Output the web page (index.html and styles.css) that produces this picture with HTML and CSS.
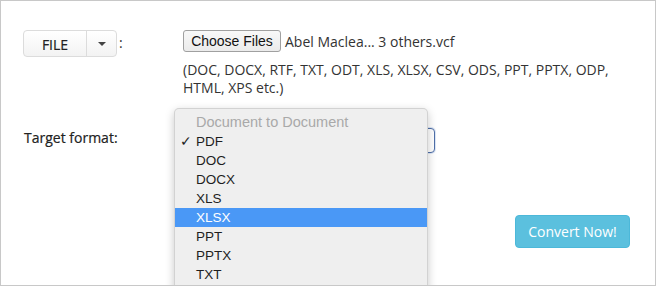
FILE: index.html
```
<!DOCTYPE html>
<html>
<head>
<meta charset="utf-8">
<link rel="stylesheet" href="styles.css">
</head>
<body>
<div class="frame">
  <div class="row row-file">
    <div class="label-col">
      <div class="btn-group">
        <span class="btn-file">FILE</span>
        <span class="btn-caret"><span class="caret"></span></span>
      </div>
      <span class="colon">:</span>
    </div>
    <div class="content-col">
      <div class="file-line">
        <span class="choose-btn">Choose Files</span>
        <span class="file-name">Abel Maclea... 3 others.vcf</span>
      </div>
      <div class="formats">(DOC, DOCX, RTF, TXT, ODT, XLS, XLSX, CSV, ODS, PPT, PPTX, ODP, HTML, XPS etc.)</div>
    </div>
  </div>
  <div class="row row-target">
    <div class="label-col target-label">Target format:</div>
    <div class="select-wrap">
      <div class="select-box"></div>
      <div class="menu">
        <div class="menu-item header">Document to Document</div>
        <div class="menu-item checked"><span class="check">✓</span>PDF</div>
        <div class="menu-item">DOC</div>
        <div class="menu-item">DOCX</div>
        <div class="menu-item">XLS</div>
        <div class="menu-item active">XLSX</div>
        <div class="menu-item">PPT</div>
        <div class="menu-item">PPTX</div>
        <div class="menu-item">TXT</div>
      </div>
    </div>
  </div>
  <div class="row row-submit">
    <span class="convert-btn">Convert Now!</span>
  </div>
</div>
</body>
</html>
```
FILE: styles.css
```
* { box-sizing: border-box; }
html, body { margin: 0; padding: 0; background: #fff; }
body { font-family: "Open Sans", sans-serif; color: #333; }

.frame {
  width: 656px;
  height: 286px;
  border: 1px solid #c8c8c8;
  overflow: hidden;
  position: relative;
  padding: 29px 25px 0 22px;
  display: flex;
  flex-direction: column;
}

.row { display: flex; }
.label-col { width: 160px; flex: none; display: flex; align-items: flex-start; }

.btn-group {
  display: flex;
  height: 27px;
  border: 1px solid #dcdcdc;
  border-radius: 4px;
  background: linear-gradient(#ffffff, #f3f3f3);
}
.btn-file {
  width: 63px;
  border-right: 1px solid #dcdcdc;
  font-size: 14px;
  font-weight: 400;
  color: #222;
  display: flex;
  align-items: center;
  justify-content: center;
  padding-top: 1px;
  -webkit-text-stroke: 0.2px #222;
}
.btn-caret {
  width: 29px;
  display: flex;
  align-items: center;
  justify-content: center;
}
.caret {
  width: 0; height: 0;
  border-left: 4px solid transparent;
  border-right: 4px solid transparent;
  border-top: 4px solid #444;
}
.colon { font-size: 14px; line-height: 26px; margin-left: 2px; color: #333; }

.content-col { flex: 1; }
.file-line { display: flex; align-items: center; height: 22px; }
.choose-btn {
  font-family: "Liberation Sans", Arial, sans-serif;
  font-size: 14px;
  color: #111;
  height: 22px;
  width: 98px;
  display: flex;
  align-items: center;
  justify-content: center;
  border: 1px solid #a0a0a0;
  border-radius: 3px;
  background: linear-gradient(#f8f8f8, #ebebeb);
}
.file-name { font-size: 14px; margin-left: 4px; color: #333; }
.formats { font-size: 14px; line-height: 18px; margin-top: 9px; color: #333; width: 440px; }

.row-target { margin-top: 31px; }
.target-label {
  font-size: 14px;
  font-weight: 400;
  line-height: 20px;
  padding-left: 1px;
  color: #222;
  -webkit-text-stroke: 0.2px #222;
}
.select-wrap { position: relative; width: 252px; height: 25px; }
.select-box {
  width: 252px;
  height: 25px;
  border: 1px solid #4f6fa8;
  border-radius: 4px;
  background: #fff;
  box-shadow: 0 0 0 1px rgba(120, 160, 220, 0.25);
}
.menu {
  position: absolute;
  left: -9px;
  top: -20px;
  width: 254px;
  height: 230px;
  background: #efefef;
  border: 1px solid rgba(0, 0, 0, 0.12);
  border-radius: 5px;
  box-shadow: 0 3px 10px rgba(0, 0, 0, 0.22);
  padding-top: 4px;
  font-family: "Liberation Sans", Arial, sans-serif;
  font-size: 13.5px;
  color: #1e1e1e;
}
.menu-item {
  height: 19px;
  line-height: 19px;
  padding-left: 21px;
  position: relative;
}
.menu-item.header { color: #a9a9a9; font-size: 14.5px; }
.menu-item.active { background: #4a98f6; color: #fff; }
.check { position: absolute; left: 5px; top: 0; font-size: 14px; }

.row-submit { justify-content: flex-end; margin-top: 62px; }
.convert-btn {
  width: 115px;
  height: 33px;
  background: #5bc0de;
  border: 1px solid #4cb8d9;
  border-radius: 4px;
  color: #fff;
  font-size: 14px;
  display: flex;
  align-items: center;
  justify-content: center;
}
```
